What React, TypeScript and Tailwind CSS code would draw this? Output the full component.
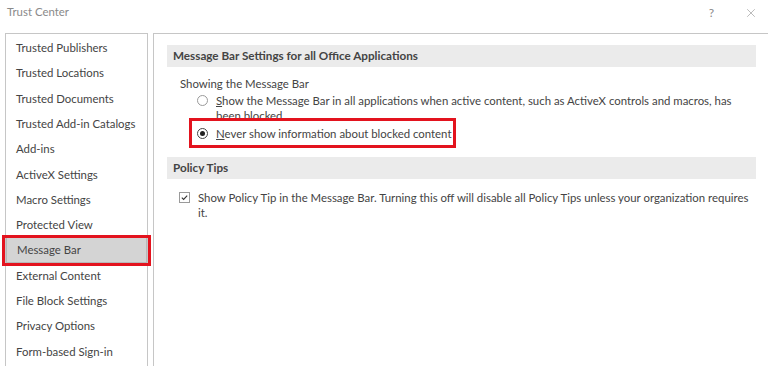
import { X } from 'lucide-react';

const navItems = [
  'Trusted Publishers',
  'Trusted Locations',
  'Trusted Documents',
  'Trusted Add-in Catalogs',
  'Add-ins',
  'ActiveX Settings',
  'Macro Settings',
  'Protected View',
  'Message Bar',
  'External Content',
  'File Block Settings',
  'Privacy Options',
  'Form-based Sign-in',
];

const font = { fontFamily: '"Lato", "Noto Sans", sans-serif' };

export default function App() {
  return (
    <div
      className="relative w-[768px] h-[366px] overflow-hidden bg-white text-[11.4px] text-[#444] whitespace-nowrap"
      style={font}
    >
      {/* Title bar */}
      <div className="flex h-[33px] items-start justify-between pl-[7px] pt-[3px]">
        <span className="text-[#8a8a8a]">Trust Center</span>
        <div className="flex items-center gap-[30px] pr-[10px] pt-[1px] text-[#8a8a8a]">
          <span className="text-[12px]">?</span>
          <X className="h-[14px] w-[14px]" strokeWidth={1} />
        </div>
      </div>

      <div className="flex gap-[5px] pl-[5px]">
        {/* Nav */}
        <div className="relative h-[340px] w-[143px] shrink-0 border border-b-0 border-[#c6c6c6] pt-[1px]">
          {navItems.map((item) => (
            <div
              key={item}
              className={
                item === 'Message Bar'
                  ? 'flex h-[25.3px] items-center border border-[#b8b8b8] bg-[#d4d4d4] pl-[10px]'
                  : 'flex h-[25.3px] items-center pl-[10px]'
              }
            >
              {item}
            </div>
          ))}
          {/* highlight annotation */}
          <div className="absolute left-[-4px] top-[201px] h-[31px] w-[149px] border-[3px] border-[#e3131e]" />
        </div>

        {/* Content */}
        <div className="h-[340px] w-[620px] shrink-0 border border-b-0 border-r-0 border-[#c6c6c6] pl-[13px] pt-[11px]">
          <div className="flex h-[22px] w-[589px] items-center bg-[#ebebeb] pl-[6px] text-[11.7px] font-bold">
            Message Bar Settings for all Office Applications
          </div>
          <div className="mt-[9px] pl-[13px] leading-[15px]">Showing the Message Bar</div>
          <div className="mt-[2px] flex pl-[30px] leading-[15px]">
            <span className="mt-[2px] mr-[8px] h-[11px] w-[11px] shrink-0 rounded-full border border-[#9a9a9a] bg-white" />
            <span>
              <span className="underline">S</span>how the Message Bar in all applications when active content, such as ActiveX controls and macros, has
              <br />
              been blocked
            </span>
          </div>
          <div className="relative mt-[3px] flex h-[15px] items-center pl-[30px] leading-[15px]">
            <span className="mr-[8px] flex h-[11px] w-[11px] shrink-0 items-center justify-center rounded-full border border-[#444] bg-white">
              <span className="h-[5px] w-[5px] rounded-full bg-[#222]" />
            </span>
            <span>
              <span className="underline">N</span>ever show information about blocked content
            </span>
            <div className="absolute left-[22px] top-[-8px] h-[30px] w-[267px] border-[3px] border-[#e3131e]" />
          </div>
          <div className="mt-[16px] flex h-[22px] w-[589px] items-center bg-[#ebebeb] pl-[6px] text-[11.7px] font-bold">
            Policy Tips
          </div>
          <div className="mt-[11px] flex pl-[12px] leading-[15px]">
            <span className="mt-[2px] mr-[8px] flex h-[11px] w-[11px] shrink-0 items-center justify-center border border-[#9a9a9a] bg-white">
              <svg viewBox="0 0 10 10" className="h-[9px] w-[9px]">
                <path d="M2 5.2 L4 7.2 L8 3" fill="none" stroke="#333" strokeWidth="1.2" />
              </svg>
            </span>
            <span>
              Show Policy Tip in the Message Bar. Turning this off will disable all Policy Tips unless your organization requires
              <br />
              it.
            </span>
          </div>
        </div>
      </div>
    </div>
  );
}
